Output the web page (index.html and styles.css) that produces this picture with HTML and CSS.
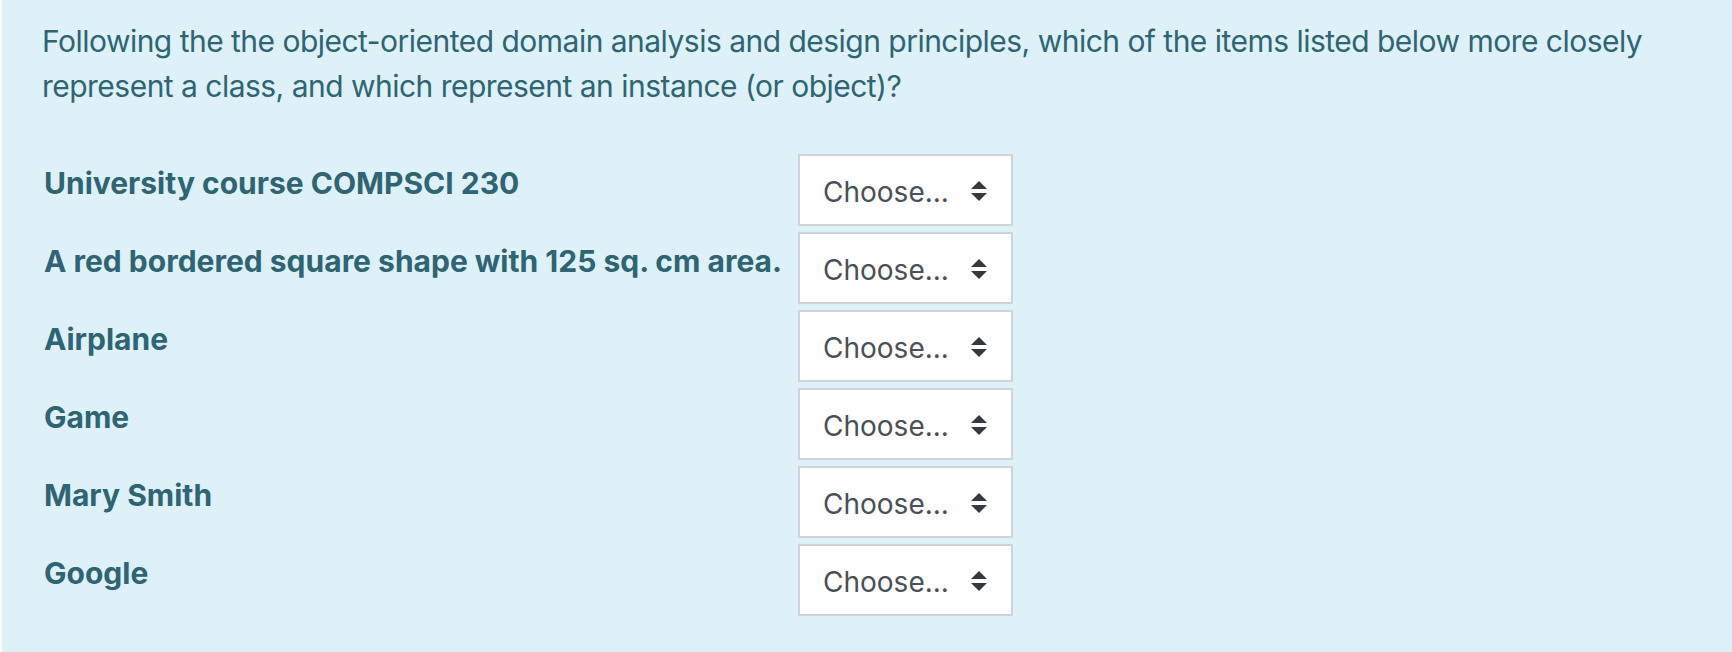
FILE: index.html
```html
<!DOCTYPE html>
<html lang="en">
<head>
<meta charset="utf-8">
<title>Match question</title>
<link rel="stylesheet" href="styles.css">
</head>
<body>
<div class="formulation">
  <p class="qtext">Following the the object-oriented domain analysis and design principles, which of the items listed below more closely represent a class, and which represent an instance (or object)?</p>
  <div class="answers">
    <div class="label">University course COMPSCI 230</div>
    <div class="select"><span class="choose">Choose...</span><svg class="arrows" viewBox="0 0 16 20" width="16" height="20"><path d="M8 0 L16 8 L0 8 Z M0 12 L16 12 L8 20 Z"/></svg></div>
    <div class="label">A red bordered square shape with 125 sq. cm area.</div>
    <div class="select"><span class="choose">Choose...</span><svg class="arrows" viewBox="0 0 16 20" width="16" height="20"><path d="M8 0 L16 8 L0 8 Z M0 12 L16 12 L8 20 Z"/></svg></div>
    <div class="label">Airplane</div>
    <div class="select"><span class="choose">Choose...</span><svg class="arrows" viewBox="0 0 16 20" width="16" height="20"><path d="M8 0 L16 8 L0 8 Z M0 12 L16 12 L8 20 Z"/></svg></div>
    <div class="label">Game</div>
    <div class="select"><span class="choose">Choose...</span><svg class="arrows" viewBox="0 0 16 20" width="16" height="20"><path d="M8 0 L16 8 L0 8 Z M0 12 L16 12 L8 20 Z"/></svg></div>
    <div class="label">Mary Smith</div>
    <div class="select"><span class="choose">Choose...</span><svg class="arrows" viewBox="0 0 16 20" width="16" height="20"><path d="M8 0 L16 8 L0 8 Z M0 12 L16 12 L8 20 Z"/></svg></div>
    <div class="label">Google</div>
    <div class="select"><span class="choose">Choose...</span><svg class="arrows" viewBox="0 0 16 20" width="16" height="20"><path d="M8 0 L16 8 L0 8 Z M0 12 L16 12 L8 20 Z"/></svg></div>
  </div>
</div>
</body>
</html>
```
FILE: styles.css
```css
html, body {
  margin: 0;
  padding: 0;
  background: #ffffff;
}
body {
  font-family: Inter, "Noto Sans", sans-serif;
}
.formulation {
  box-sizing: border-box;
  height: 652px;
  margin-left: 2px;
  background: #def1f8;
  color: #2f6473;
  padding: 19px 40px 0 40px;
}
.qtext {
  margin: 0 0 45px 0;
  font-size: 30px;
  line-height: 45px;
  font-weight: 400;
  letter-spacing: -0.52px;
}
.answers {
  display: grid;
  grid-template-columns: max-content 215px;
  column-gap: 16px;
  row-gap: 6px;
  justify-content: start;
}
.label {
  font-size: 30px;
  line-height: 45px;
  font-weight: 700;
  padding-top: 7px;
  padding-left: 2px;
}
.select {
  box-sizing: border-box;
  height: 72px;
  background: #ffffff;
  border: 2px solid #ced4da;
  display: flex;
  align-items: center;
  justify-content: space-between;
  padding: 3px 24px 0 23px;
  color: #495057;
  font-size: 28px;
}
.arrows {
  fill: #343a40;
  flex: none;
  margin-top: -2px;
}
```
